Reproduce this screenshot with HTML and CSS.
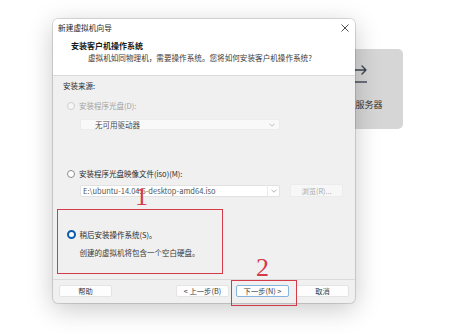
FILE: index.html
```html
<!DOCTYPE html>
<html lang="zh-CN">

<head>
    <meta charset="UTF-8">
    <meta name="viewport" content="width=device-width, initial-scale=1.0">
    <title>新建虚拟机向导</title>
    <link rel="stylesheet" href="styles.css">
</head>

<body>
    <!-- desktop behind the dialog -->
    <main class="desk">
        <div class="tile">
            <svg class="tile-icon" width="16" height="20" viewBox="0 0 16 20">
                <path d="M2 7h12M10 3l4 4-4 4" fill="none" stroke="#3b4452" stroke-width="1.4" stroke-linecap="round" stroke-linejoin="round" />
                <path d="M2 19h13" stroke="#3b4452" stroke-width="1.4" />
            </svg>
            <span class="tile-label">远程服务器</span>
        </div>
    </main>

    <!-- wizard dialog -->
    <section class="wizard">
        <header class="wizard-head">
            <div class="titlebar">
                <span class="title">新建虚拟机向导</span>
                <svg class="close" width="8" height="8" viewBox="0 0 8 8">
                    <path d="M0.5 0.5l7 7M7.5 0.5l-7 7" stroke="#3a3a3a" stroke-width="0.9" />
                </svg>
            </div>
            <h1 class="head-title">安装客户机操作系统</h1>
            <p class="head-sub">虚拟机如同物理机，需要操作系统。您将如何安装客户机操作系统?</p>
        </header>

        <div class="wizard-body">
            <div class="group-title">安装来源:</div>

            <label class="option disabled"><span class="radio"></span>安装程序光盘(D):</label>
            <div class="select select-drive disabled">
                <span>无可用驱动器</span>
                <svg class="chev" width="6" height="4" viewBox="0 0 6 4"><path d="M0.5 0.8l2.5 2.4 2.5-2.4" fill="none" stroke="#b0b0b0" stroke-width="0.8" /></svg>
            </div>

            <label class="option option-iso"><span class="radio"></span>安装程序光盘映像文件(iso)(M):</label>
            <div class="file-row">
                <div class="select select-iso">
                    <span>E:\ubuntu-14.04.6-desktop-amd64.iso</span>
                    <span class="chev-box">
                        <svg class="chev" width="6" height="4" viewBox="0 0 6 4"><path d="M0.5 0.8l2.5 2.4 2.5-2.4" fill="none" stroke="#a0a0a0" stroke-width="0.8" /></svg>
                    </span>
                </div>
                <button type="button" class="btn btn-browse">浏览(R)...</button>
            </div>

            <div class="later mark">
                <label class="option checked"><span class="radio"></span>稍后安装操作系统(S)。</label>
                <p class="note">创建的虚拟机将包含一个空白硬盘。</p>
            </div>
        </div>

        <footer class="wizard-foot">
            <button type="button" class="btn">帮助</button>
            <div class="nav">
                <button type="button" class="btn">&lt; 上一步(B)</button>
                <button type="button" class="btn btn-next">下一步(N) &gt;</button>
                <button type="button" class="btn">取消</button>
            </div>
        </footer>

        <!-- annotations -->
        <span class="step step-1">1</span>
        <span class="step step-2">2</span>
        <div class="mark mark-next"></div>
    </section>
</body>

</html>
```

FILE: styles.css
```css
* {
    margin: 0;
    padding: 0;
    box-sizing: border-box;
}

body {
    position: relative;
    width: 474px;
    height: 336px;
    overflow: hidden;
    background-color: #ffffff;
    color: #2b2b2b;
    font-family: "Noto Sans CJK SC", "Noto Sans", sans-serif;
    font-size: 7.5px;
    line-height: 12px;
}

/* desktop */
.desk {
    display: flex;
    justify-content: flex-end;
    padding: 49px 71px 0 0;
}

.tile {
    display: flex;
    flex-direction: column;
    align-items: center;
    width: 86px;
    height: 80px;
    padding-top: 14px;
    background-color: #d6d6d6;
    border-radius: 5px;
}

.tile-icon {
    display: block;
}

.tile-label {
    margin-top: 16px;
    font-size: 9px;
    color: #333333;
}

/* dialog */
.wizard {
    position: absolute;
    left: 53px;
    top: 19px;
    width: 302px;
    height: 284px;
    display: flex;
    flex-direction: column;
    background-color: #f0f0f0;
    border-radius: 5px;
    box-shadow: 0 0 0 1px rgba(0, 0, 0, 0.13), 0 6px 26px rgba(0, 0, 0, 0.22);
}

.wizard-head {
    height: 57px;
    background-color: #ffffff;
    border-bottom: 1px solid #d9d9d9;
    border-radius: 5px 5px 0 0;
}

.titlebar {
    display: flex;
    align-items: center;
    justify-content: space-between;
    height: 18px;
    padding: 0 6px 0 5px;
}

.title {
    font-size: 7.7px;
    color: #1f1f1f;
}

.close {
    display: block;
    margin-top: -1px;
}

.head-title {
    margin-top: 3px;
    padding-left: 18px;
    font-size: 8px;
    font-weight: 700;
    color: #1a1a1a;
}

.head-sub {
    padding-left: 35px;
    font-size: 7.6px;
    color: #3a3a3a;
}

.wizard-body {
    flex: 1;
    padding-top: 4px;
}

.group-title {
    margin-left: 10px;
}

.option {
    display: flex;
    align-items: center;
    gap: 4px;
    margin-left: 14px;
}

.option.disabled {
    margin-top: 8px;
    color: #a3a3a3;
}

.option-iso {
    margin-top: 38px;
}

.radio {
    width: 8px;
    height: 8px;
    border: 1px solid #8c8c8c;
    border-radius: 50%;
    background-color: #ffffff;
}

.disabled .radio {
    border-color: #d0d0d0;
    background-color: #f6f6f6;
}

.checked .radio {
    width: 9px;
    height: 9px;
    border: 2.8px solid #0b5cad;
}

.select {
    display: flex;
    align-items: center;
    justify-content: space-between;
    width: 200px;
    background-color: #ffffff;
    border: 1px solid #e2e2e2;
    border-radius: 2px;
}

.select-drive {
    height: 11px;
    margin: 7px 0 0 27px;
    padding: 0 4px 0 14px;
    background-color: #f9f9f9;
    border-color: #ececec;
    color: #4a4a4a;
    line-height: 9px;
}

.file-row {
    display: flex;
    align-items: flex-start;
    margin: 4px 0 0 27px;
}

.select-iso {
    height: 12px;
    margin-top: 1px;
    padding-left: 2px;
    color: #555555;
    line-height: 10px;
}

.chev-box {
    display: flex;
    align-items: center;
    justify-content: center;
    width: 12px;
    height: 10px;
    border-left: 1px solid #ececec;
}

.chev {
    display: block;
}

.btn {
    width: 53px;
    height: 12px;
    background-color: #fdfdfd;
    border: 1px solid #e4e4e4;
    border-radius: 2px;
    color: #3a3a3a;
    font-family: inherit;
    font-size: 7.3px;
    line-height: 10px;
}

.btn-browse {
    height: 13px;
    margin-left: 10px;
    color: #a8a8a8;
    border-color: #ececec;
    background-color: #f7f7f7;
}

.mark {
    border: 1.5px solid #d43a48;
}

.later {
    width: 166px;
    height: 65px;
    margin: 12px 0 0 4px;
}

.later .option {
    margin: 18.5px 0 0 8.5px;
}

.note {
    margin: 6px 0 0 21.5px;
    color: #3a3a3a;
}

.wizard-foot {
    display: flex;
    justify-content: space-between;
    height: 24px;
    padding: 5px 6px 0 6px;
    border-top: 1px solid #dadada;
}

.nav {
    display: flex;
    gap: 7px;
}

.btn-next {
    border-color: #86b4e2;
}

/* red annotations */
.step {
    position: absolute;
    font-family: "Liberation Serif", serif;
    font-size: 26px;
    line-height: 26px;
    color: #d43a48;
}

.step-1 {
    left: 82px;
    top: 165px;
}

.step-2 {
    left: 203px;
    top: 236px;
}

.mark-next {
    position: absolute;
    left: 178px;
    top: 261px;
    width: 66px;
    height: 26px;
}
```
